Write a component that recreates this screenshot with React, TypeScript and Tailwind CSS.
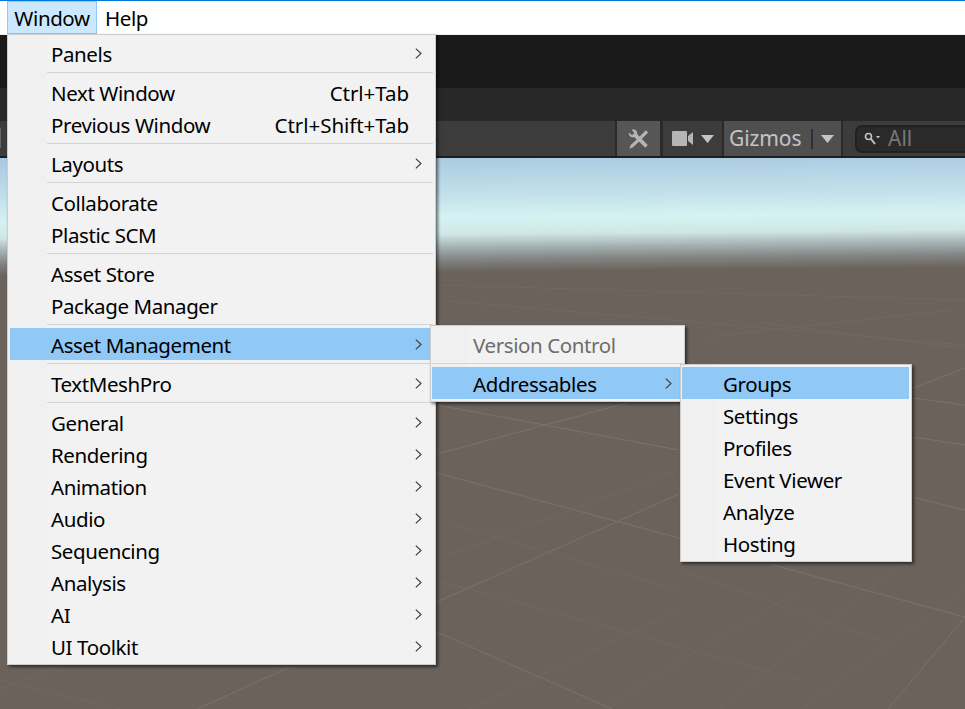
import React from 'react';

const font = "font-['Noto_Sans','Open_Sans',sans-serif]";

type Row = { label?: string; shortcut?: string; arrow?: boolean; active?: boolean; disabled?: boolean; sep?: boolean };

const mainMenu: Row[] = [
  { label: 'Panels', arrow: true },
  { sep: true },
  { label: 'Next Window', shortcut: 'Ctrl+Tab' },
  { label: 'Previous Window', shortcut: 'Ctrl+Shift+Tab' },
  { sep: true },
  { label: 'Layouts', arrow: true },
  { sep: true },
  { label: 'Collaborate' },
  { label: 'Plastic SCM' },
  { sep: true },
  { label: 'Asset Store' },
  { label: 'Package Manager' },
  { sep: true },
  { label: 'Asset Management', arrow: true, active: true },
  { sep: true },
  { label: 'TextMeshPro', arrow: true },
  { sep: true },
  { label: 'General', arrow: true },
  { label: 'Rendering', arrow: true },
  { label: 'Animation', arrow: true },
  { label: 'Audio', arrow: true },
  { label: 'Sequencing', arrow: true },
  { label: 'Analysis', arrow: true },
  { label: 'AI', arrow: true },
  { label: 'UI Toolkit', arrow: true },
];

const assetMenu: Row[] = [
  { label: 'Version Control', disabled: true },
  { sep: true },
  { label: 'Addressables', arrow: true, active: true },
];

const addrMenu: Row[] = [
  { label: 'Groups', active: true },
  { label: 'Settings' },
  { label: 'Profiles' },
  { label: 'Event Viewer' },
  { label: 'Analyze' },
  { label: 'Hosting' },
];

const Chevron = () => (
  <svg width="7" height="11" viewBox="0 0 7 11" className="absolute right-[11px] top-[11px]" fill="none" stroke="#3a3a3a" strokeWidth="1.1">
    <path d="M0.8 0.6 L6 5.5 L0.8 10.4" />
  </svg>
);

const MenuPanel = ({ rows, className, sepClass }: { rows: Row[]; className: string; sepClass: string }) => (
  <div className={`absolute border border-[#cdcdcd] py-[2px] shadow-[2px_2px_3px_rgba(0,0,0,0.55)] ${className}`}>
    {rows.map((r, i) =>
      r.sep ? (
        <div key={i} className={`flex h-[7px] items-center ${sepClass}`}>
          <div className="h-[1px] w-full bg-[#d4d4d4]" />
        </div>
      ) : (
        <div
          key={i}
          className={`relative flex h-[32px] items-center justify-between pl-[41px] pr-[24px] pt-[2px] text-[20.5px] leading-[28px] whitespace-nowrap tracking-[-0.4px] ${
            r.active ? 'bg-[#90c8f6]' : ''
          } ${r.disabled ? 'text-[#6d6d6d]' : 'text-black'}`}
        >
          <span>{r.label}</span>
          {r.shortcut && <span className="tracking-[-0.05px]">{r.shortcut}</span>}
          {r.arrow && <Chevron />}
        </div>
      ),
    )}
  </div>
);

// viewBox starts at y=158 so coordinates read as page pixels
const SceneGrid = () => (
  <svg className="absolute inset-0 h-full w-full" viewBox="0 158 965 551" fill="none" stroke="#7a736d" strokeWidth="1">
    <g stroke="#706963">
      <path d="M436 300 L965 345" />
      <path d="M436 285 L965 300" />
      <path d="M707 337 L953 310" />
      <path d="M763 323 L953 347" />
      <path d="M436 560 L679 470" />
      <path d="M436 520 L679 590" />
      <path d="M470 709 L679 610" />
      <path d="M600 709 L800 590" />
      <path d="M720 709 L900 565" />
      <path d="M800 709 L965 590" />
      <path d="M436 580 L800 680" />
      <path d="M680 570 L880 640" />
      <path d="M0 680 L120 709" />
      <path d="M0 690 L60 665" />
    </g>
    <path d="M437 405 L679 450" />
    <path d="M437 454 L627 403" />
    <path d="M437 473 L679 538" />
    <path d="M437 602 L679 494" />
    <path d="M437 632 L612 709" />
    <path d="M913 398 L965 405" />
    <path d="M913 437 L965 445" />
    <path d="M913 497 L965 510" />
    <path d="M773 565 L965 617" />
    <path d="M965 617 L888 709" />
    <path d="M913 388 L965 368" />
    <path d="M197 709 L290 667" />
  </svg>
);

export default function App() {
  return (
    <div className={`relative flex h-[709px] w-[965px] flex-col overflow-hidden bg-[#6a625b] ${font}`}>
      <div className="h-[1px] bg-[#0078d7]" />
      <div className="flex h-[34px] items-stretch border-b border-[#f0f0f0] bg-white pl-[7px] text-[20.5px] tracking-[-0.4px] text-black">
        <div className="flex w-[90px] items-center justify-center border border-[#90c8f6] bg-[#cce8ff] pt-[2px]">Window</div>
        <div className="flex items-center pl-[8px] pt-[2px]">Help</div>
      </div>
      <div className="h-[53px] bg-[#1a1a1a]" />
      <div className="h-[33px] bg-[#282828]" />
      <div className="flex h-[37px] items-stretch justify-end border-b-2 border-[#1f1f1f] bg-[#3c3c3c] text-[#c4c4c4]">
        <div className="mr-auto mt-[7px] h-[20px] w-[1px] bg-[#666]" />
        <div className="flex w-[45px] items-center justify-center border-l-2 border-[#2a2a2a] bg-[#565656]">
          <svg width="23" height="22" viewBox="0 0 24 24" fill="#b5b5b5">
            <path d="M1.5 5 L5 8 L7.5 5.5 L4.5 2 C7.5 0.8 11 2.5 10.5 6.5 L22 18.5 L19.5 21.5 L7.5 10 C4 11 1 8.5 1.5 5 Z" />
            <path d="M20 2.5 L22.5 5 L15.5 12 L13 9.5 Z" />
            <path d="M10.5 12 L13 14.5 L6 21 L2 22.5 L3.5 18.5 Z" />
          </svg>
        </div>
        <div className="flex w-[62px] items-center justify-center gap-[7px] border-l-[3px] border-[#2a2a2a] bg-[#3c3c3c]">
          <svg width="22" height="15" viewBox="0 0 22 15" fill="#b5b5b5">
            <rect x="0" y="0" width="15" height="15" rx="1" />
            <path d="M16 5 L21 1 L21 14 L16 10 Z" />
          </svg>
          <svg width="13" height="8" viewBox="0 0 13 8" fill="#c4c4c4"><path d="M0 0 H13 L6.5 8 Z" /></svg>
        </div>
        <div className="flex w-[121px] items-center border-x-2 border-[#2a2a2a] bg-[#4f4f4f] pl-[5px] text-[21px] tracking-[-0.1px]">
          <span className="w-[82px]">Gizmos</span>
          <div className="h-[20px] w-[2px] bg-[#2f2f2f]" />
          <svg className="ml-[8px]" width="13" height="8" viewBox="0 0 13 8" fill="#c4c4c4"><path d="M0 0 H13 L6.5 8 Z" /></svg>
        </div>
        <div className="ml-[12px] mt-[4px] flex h-[28px] w-[110px] items-center gap-[8px] rounded-l-[7px] border-2 border-r-0 border-[#212121] bg-[#2a2a2a] pl-[7px] text-[21px] text-[#777]">
          <svg width="16" height="14" viewBox="0 0 16 14" fill="none" stroke="#c4c4c4" strokeWidth="1.6">
            <circle cx="4.5" cy="4.5" r="3" />
            <path d="M7 7 L11 12" strokeWidth="2" />
            <path d="M12 4 H16 L14 6.5 Z" fill="#c4c4c4" stroke="none" />
          </svg>
          <span>All</span>
        </div>
      </div>
      <div className="relative flex-1 bg-[linear-gradient(179.5deg,#a8c8e0_0px,#c2e0ea_40px,#d6f2f3_64px,#d0e6e6_80px,#a5b2b2_93px,#838684_105px,#6a625b_118px,#6a625b_100%)]">
        <SceneGrid />
      </div>

      <MenuPanel
        rows={mainMenu}
        sepClass="pl-[37px]"
        className="left-[7px] top-[34px] w-[429px] bg-[linear-gradient(to_right,#f0f0f0_39px,#f2f2f2_39px)] px-[2px]"
      />
      <MenuPanel
        rows={assetMenu}
        sepClass="pl-0"
        className="left-[430px] top-[325px] w-[255px] bg-[linear-gradient(to_right,#f0f0f0_37px,#f2f2f2_37px)] px-[1px]"
      />
      <MenuPanel
        rows={addrMenu}
        sepClass="pl-0"
        className="left-[680px] top-[364px] w-[232px] bg-[linear-gradient(to_right,#f0f0f0_37px,#f2f2f2_37px)] pl-[1px] pr-[2px]"
      />
    </div>
  );
}
